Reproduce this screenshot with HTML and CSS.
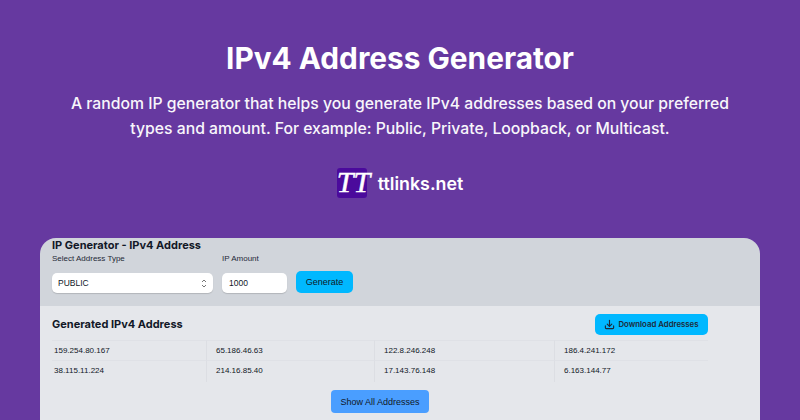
FILE: index.html
```html
<!DOCTYPE html>
<html lang="en">
<head>
    <meta charset="UTF-8">
    <title>IPv4 Address Generator</title>
    <link rel="stylesheet" href="styles.css">
</head>
<body>
    <header class="hero">
        <h1>IPv4 Address Generator</h1>
        <p class="intro">A random IP generator that helps you generate IPv4 addresses based on your preferred types and amount. For example: Public, Private, Loopback, or Multicast.</p>
        <div class="brand">
            <span class="brand-logo">TT</span>
            <span class="brand-name">ttlinks.net</span>
        </div>
    </header>

    <main class="panel">
        <section class="panel-top">
            <h2>IP Generator - IPv4 Address</h2>
            <div class="form-row">
                <div class="field field-type">
                    <label>Select Address Type</label>
                    <div class="input-box">
                        PUBLIC
                        <svg class="updown" width="6" height="9" viewBox="0 0 6 9" fill="none" stroke="#666" stroke-width="0.9">
                            <path d="M1 3 3 1l2 2"/>
                            <path d="M1 6l2 2 2-2"/>
                        </svg>
                    </div>
                </div>
                <div class="field field-amount">
                    <label>IP Amount</label>
                    <div class="input-box">1000</div>
                </div>
                <button class="btn btn-generate">Generate</button>
            </div>
        </section>

        <section class="panel-bottom">
            <div class="result-head">
                <h3>Generated IPv4 Address</h3>
                <button class="btn btn-download">
                    <svg width="11" height="11" viewBox="0 0 24 24" fill="none" stroke="#1f2937" stroke-width="2.500" stroke-linecap="round" stroke-linejoin="round">
                        <path d="M12 3v13"/>
                        <path d="m7 11 5 5 5-5"/>
                        <path d="M3 15v4a2 2 0 0 0 2 2h14a2 2 0 0 0 2-2v-4"/>
                    </svg>
                    Download Addresses
                </button>
            </div>
            <div class="ip-grid">
                <div class="ip-cell">159.254.80.167</div>
                <div class="ip-cell">65.186.46.63</div>
                <div class="ip-cell">122.8.246.248</div>
                <div class="ip-cell">186.4.241.172</div>
                <div class="ip-cell">38.115.11.224</div>
                <div class="ip-cell">214.16.85.40</div>
                <div class="ip-cell">17.143.76.148</div>
                <div class="ip-cell">6.163.144.77</div>
            </div>
            <div class="show-all">
                <button class="btn btn-show">Show All Addresses</button>
            </div>
        </section>
    </main>
</body>
</html>
```

FILE: styles.css
```css
html, body {
    height: 420px;
    overflow: hidden;
}

body {
    margin: 0;
    background-color: #6639a0;
    font-family: 'Inter', sans-serif;
    color: #fff;
}

.hero {
    text-align: center;
    padding-top: 40px;
}

h1 {
    margin: 0;
    font-size: 29.800px;
    line-height: 36px;
    font-weight: 700;
}

.intro {
    width: 680px;
    margin: 15px auto 0;
    font-size: 15.750px;
    line-height: 25px;
    font-weight: 500;
    color: #f8f6fb;
}

.brand {
    display: flex;
    align-items: center;
    justify-content: center;
    gap: 11px;
    margin-top: 27px;
}

.brand-logo {
    width: 30px;
    height: 30px;
    border-radius: 3px;
    background-color: #4b0a9c;
    font-family: 'Liberation Serif', serif;
    font-style: italic;
    font-size: 30px;
    line-height: 28px;
    text-align: center;
    -webkit-text-stroke: 0.5px #fff;
}

.brand-name {
    font-size: 17.800px;
    font-weight: 600;
}

.panel {
    width: 720px;
    margin: 40px auto 0;
    border-radius: 16px 16px 0 0;
    overflow: hidden;
    color: #111827;
}

.panel-top {
    height: 68px;
    padding: 0 12px;
    background-color: #d1d5db;
}

h2 {
    margin: 0;
    font-size: 11px;
    line-height: 14px;
    font-weight: 700;
}

.form-row {
    display: flex;
    align-items: flex-end;
    margin-top: 2px;
}

.field label {
    display: block;
    font-family: 'Liberation Sans', sans-serif;
    font-size: 8px;
    line-height: 10px;
    margin-bottom: 9px;
    color: #1f2937;
}

.input-box {
    display: flex;
    align-items: center;
    justify-content: space-between;
    box-sizing: border-box;
    height: 20px;
    padding: 0 6px 0 7px;
    background-color: #fff;
    border-radius: 5px;
    box-shadow: 0 1px 1px rgba(0, 0, 0, 0.15);
    font-family: 'Liberation Sans', sans-serif;
    font-size: 8.500px;
    color: #111827;
}

.field-type {
    width: 161px;
    margin-right: 9px;
}

.field-type .input-box {
    padding-left: 6px;
}

.field-amount {
    width: 65px;
    margin-right: 9px;
}

.btn {
    border: none;
    font-family: 'Liberation Sans', sans-serif;
    color: #111827;
    padding: 0;
}

.btn-generate {
    width: 57px;
    height: 22px;
    border-radius: 5px;
    background-color: #00b8ff;
    font-size: 9px;
}

.panel-bottom {
    height: 114px;
    padding: 0 52px 0 12px;
    background-color: #e5e7eb;
}

.result-head {
    display: flex;
    align-items: center;
    justify-content: space-between;
    height: 34px;
    padding-top: 2px;
    box-sizing: border-box;
}

h3 {
    margin: 0;
    font-size: 11px;
    font-weight: 700;
}

.btn-download {
    display: flex;
    align-items: center;
    justify-content: center;
    gap: 3px;
    width: 113px;
    height: 21px;
    border-radius: 5px;
    background-color: #00b8ff;
    font-family: 'Inter', sans-serif;
    font-size: 7.800px;
    font-weight: 600;
    color: #1f2937;
}

.ip-grid {
    display: grid;
    grid-template-columns: 154px 168px 180px 154px;
    grid-template-rows: 20px 22px;
}

.ip-cell {
    box-sizing: border-box;
    padding-left: 2px;
    border-top: 1px solid #dfe1e6;
    font-family: 'Liberation Sans', sans-serif;
    font-size: 8px;
    line-height: 19px;
    color: #111827;
}

.ip-cell:nth-child(n+2):not(:nth-child(5)) {
    border-left: 1px solid #dcdee3;
    padding-left: 9px;
}

.show-all {
    display: flex;
    justify-content: center;
    margin-top: 8px;
}

.btn-show {
    width: 98px;
    height: 23px;
    border-radius: 4px;
    background-color: #4a9eff;
    font-size: 9px;
}
```
